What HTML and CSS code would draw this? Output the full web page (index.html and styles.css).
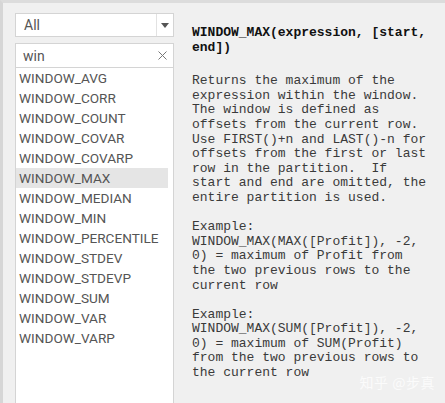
FILE: index.html
```html
<!DOCTYPE html>
<html lang="en">
<head>
    <meta charset="UTF-8">
    <title>Functions</title>
    <link rel="stylesheet" href="styles.css">
</head>
<body>
    <div class="frame">
        <div class="picker">
            <div class="select">
                <span class="select-value">All</span>
                <span class="select-arrow">
                    <svg width="8" height="5" viewBox="0 0 8 5"><path d="M0 0h8L4 5z" fill="#555"/></svg>
                </span>
            </div>
            <div class="search">
                <span class="search-value">win</span>
                <svg class="search-clear" width="9" height="9" viewBox="0 0 9 9"><path d="M0.5 0.5l8 8M8.5 0.5l-8 8" stroke="#777" stroke-width="1"/></svg>
            </div>
            <ul class="func-list">
                <li>WINDOW_AVG</li>
                <li>WINDOW_CORR</li>
                <li>WINDOW_COUNT</li>
                <li>WINDOW_COVAR</li>
                <li>WINDOW_COVARP</li>
                <li class="selected">WINDOW_MAX</li>
                <li>WINDOW_MEDIAN</li>
                <li>WINDOW_MIN</li>
                <li>WINDOW_PERCENTILE</li>
                <li>WINDOW_STDEV</li>
                <li>WINDOW_STDEVP</li>
                <li>WINDOW_SUM</li>
                <li>WINDOW_VAR</li>
                <li>WINDOW_VARP</li>
            </ul>
        </div>
        <div class="help">
            <pre class="help-title">WINDOW_MAX(expression, [start,
end])</pre>
            <pre class="help-body">Returns the maximum of the
expression within the window.
The window is defined as
offsets from the current row.
Use FIRST()+n and LAST()-n for
offsets from the first or last
row in the partition.  If
start and end are omitted, the
entire partition is used.

Example:
WINDOW_MAX(MAX([Profit]), -2,
0) = maximum of Profit from
the two previous rows to the
current row

Example:
WINDOW_MAX(SUM([Profit]), -2,
0) = maximum of SUM(Profit)
from the two previous rows to
the current row</pre>
        </div>
        <div class="mark">知乎 @步真</div>
    </div>
</body>
</html>
```
FILE: styles.css
```css
body {
    margin: 0;
    padding: 0;
    background: #f0f0f0;
    overflow: hidden;
}
.frame {
    position: relative;
    display: flex;
    height: 403px;
    box-sizing: border-box;
    border-top: 3px solid #dcdcdc;
    border-left: 3px solid #d6d6d6;
    padding: 10px 0 0 12px;
}
.picker {
    width: 159px;
    display: flex;
    flex-direction: column;
    font-family: Roboto, "Liberation Sans", sans-serif;
    font-size: 13.6px;
    color: #555;
}
.select {
    display: flex;
    height: 22px;
    background: #fff;
    border: 1px solid #d4d4d4;
}
.select-value {
    flex: 1;
    padding-left: 8px;
    line-height: 22px;
    font-size: 14px;
}
.select-arrow {
    width: 16px;
    border-left: 1px solid #e2e2e2;
    display: flex;
    align-items: center;
    justify-content: center;
}
.search {
    display: flex;
    align-items: center;
    height: 23px;
    margin-top: 6px;
    background: #fff;
    border: 1px solid #d4d4d4;
    border-bottom: none;
    padding: 0 6px 0 7px;
}
.search-value {
    flex: 1;
    font-size: 14px;
}
.func-list {
    flex: 1;
    list-style: none;
    margin: 0;
    padding: 0 5px 0 0;
    background: #fff;
    border: 1px solid #d4d4d4;
    border-bottom: none;
}
.func-list li {
    height: 20px;
    line-height: 20px;
    padding-left: 3px;
    white-space: nowrap;
}
.func-list li.selected {
    background: #e5e5e5;
}
.help {
    padding: 13px 0 0 18px;
}
.help pre {
    margin: 0;
    font-family: "Liberation Mono", "Courier New", monospace;
    font-size: 13px;
    line-height: 14.6px;
}
.help-title {
    font-weight: bold;
    color: #111;
    margin-bottom: 19px !important;
}
.help-body {
    color: #3a3a3a;
}
.mark {
    position: absolute;
    right: 10px;
    bottom: 11px;
    font-family: "Noto Sans CJK SC", sans-serif;
    font-size: 14px;
    color: rgba(255, 255, 255, 0.75);
    letter-spacing: 0.5px;
}
```
